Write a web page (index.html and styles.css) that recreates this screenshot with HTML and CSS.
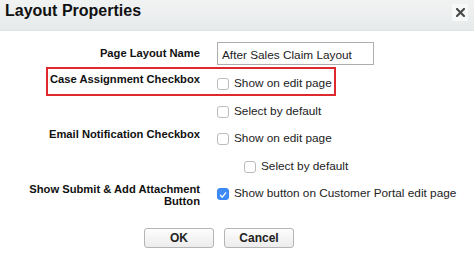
FILE: index.html
```html
<!DOCTYPE html>
<html lang="en">
<head>
    <meta charset="UTF-8">
    <title>Layout Properties</title>
    <link rel="stylesheet" href="styles.css">
</head>
<body>
    <div class="dialog">
        <div class="dialog-header">
            <h2 class="dialog-title">Layout Properties</h2>
            <button class="close-btn" aria-label="Close">
                <svg width="9" height="9" viewBox="0 0 9 9"><path d="M1 1 L8 8 M8 1 L1 8" stroke="#4a4a4a" stroke-width="2.2" stroke-linecap="square"/></svg>
            </button>
        </div>

        <div class="dialog-body">
            <div class="row row-name">
                <div class="label">Page Layout Name</div>
                <div class="value"><input class="text-input" type="text" value="After Sales Claim Layout"></div>
            </div>

            <div class="row">
                <div class="label">Case Assignment Checkbox</div>
                <label class="value check"><span class="box"></span>Show on edit page</label>
            </div>

            <div class="row">
                <div class="label"></div>
                <label class="value check"><span class="box"></span>Select by default</label>
            </div>

            <div class="row">
                <div class="label">Email Notification Checkbox</div>
                <label class="value check"><span class="box"></span>Show on edit page</label>
            </div>

            <div class="row">
                <div class="label"></div>
                <label class="value check indent"><span class="box"></span>Select by default</label>
            </div>

            <div class="row">
                <div class="label">Show Submit &amp; Add Attachment<br>Button</div>
                <label class="value check"><span class="box checked">
                    <svg width="12" height="12" viewBox="0 0 12 12"><path d="M3 6.3 L5.2 8.6 L9.2 3.4" fill="none" stroke="#fff" stroke-width="1.6" stroke-linecap="round" stroke-linejoin="round"/></svg>
                </span>Show button on Customer Portal edit page</label>
            </div>

            <div class="buttons">
                <button class="btn">OK</button>
                <button class="btn">Cancel</button>
            </div>

            <!-- highlight annotation -->
            <div class="highlight"></div>
        </div>
    </div>
</body>
</html>
```

FILE: styles.css
```css
body {
    margin: 0;
    background: #fff;
    font-family: "Liberation Sans", Arial, sans-serif;
    color: #111;
}

.dialog {
    width: 474px;
    height: 253px;
    overflow: hidden;
}

.dialog-header {
    height: 30px;
    display: flex;
    align-items: center;
    justify-content: space-between;
    padding: 0 6px 0 5px;
    background: linear-gradient(#f1f3f3, #e7eaeb);
    border-bottom: 1px solid #e1e4e5;
}

.dialog-title {
    margin: 0;
    font-size: 16px;
    font-weight: bold;
    color: #111;
    position: relative;
    top: -4px;
}

.close-btn {
    width: 16px;
    height: 17px;
    padding: 0;
    border: none;
    background: #f7f8f8;
    display: flex;
    align-items: center;
    justify-content: center;
    position: relative;
    top: -3px;
}

.dialog-body {
    position: relative;
    padding-top: 11px;
}

.row {
    display: grid;
    grid-template-columns: 200px auto;
    column-gap: 17px;
    align-items: start;
    height: 27.5px;
}

.row-name {
    height: 31px;
}

.label {
    text-align: right;
    font-size: 11.2px;
    line-height: 12px;
    font-weight: bold;
    color: #111;
}

.row-name .label {
    padding-top: 5px;
}

.value {
    font-size: 11.8px;
    line-height: 16px;
    color: #222;
    white-space: nowrap;
}

.text-input {
    box-sizing: border-box;
    width: 157px;
    height: 23px;
    margin: 0;
    padding: 2px 4px 0;
    border: 1px solid #adadad;
    font-family: inherit;
    font-size: 11.8px;
    color: #222;
    outline: none;
}

.check {
    display: flex;
    align-items: center;
    padding-top: 2px;
}

.check.indent {
    padding-left: 27px;
}

.box {
    box-sizing: border-box;
    width: 12px;
    height: 12px;
    margin-right: 5px;
    margin-top: 2px;
    border: 1px solid #bcbcbc;
    border-radius: 3px;
    background: #fff;
    display: flex;
}

.box.checked {
    border-color: #3a86f3;
    background: #3d8af5;
}

.buttons {
    display: flex;
    gap: 10px;
    padding-left: 144px;
    margin-top: 17px;
}

.btn {
    width: 70px;
    height: 20px;
    padding: 0;
    border: 1px solid #b4b4b4;
    border-radius: 3px;
    background: linear-gradient(#fdfdfd, #ececec);
    font-family: inherit;
    font-size: 12px;
    font-weight: bold;
    color: #222;
}

.highlight {
    position: absolute;
    left: 46px;
    top: 36px;
    width: 290px;
    height: 29px;
    box-sizing: border-box;
    border: 2px solid #de2a2f;
}
```
